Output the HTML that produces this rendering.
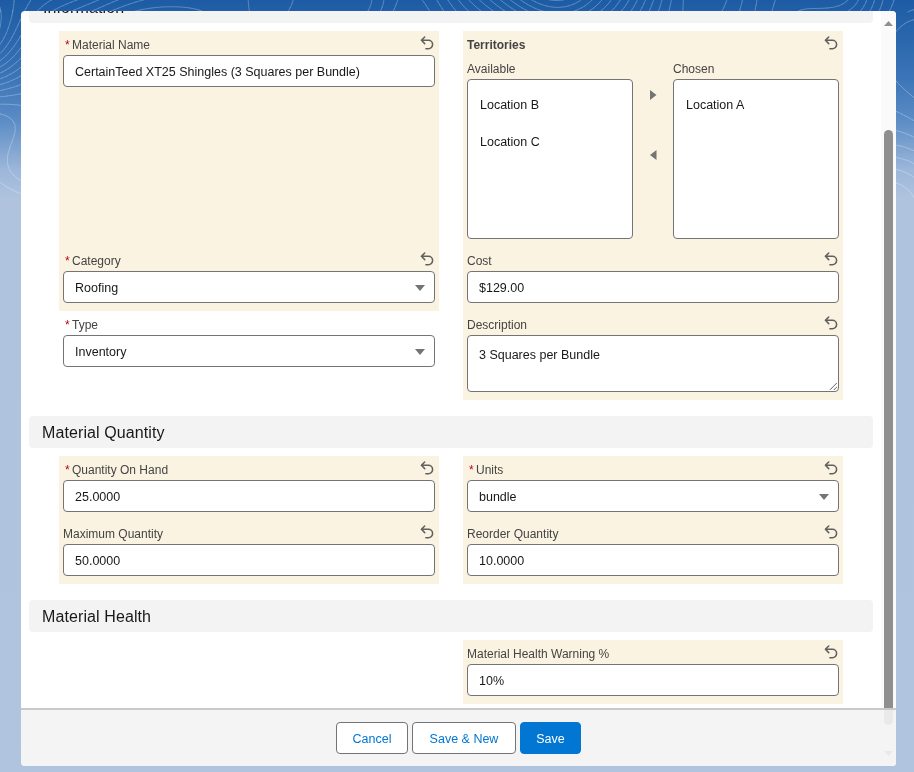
<!DOCTYPE html><html><head><meta charset="utf-8"><style>
html,body{margin:0;padding:0}
body{width:914px;height:772px;overflow:hidden;position:relative;font-family:"Liberation Sans",sans-serif;
background:linear-gradient(to bottom,#1d5ca5 0px,#2a67ad 40px,#3d76b8 80px,#5b8cc5 120px,#9cb7da 170px,#afc3df 198px,#b0c4df 772px);}
.a{position:absolute}
.t12,.t125,.t16,.b12{position:absolute;white-space:nowrap;will-change:transform}
.t12{font-size:12px;line-height:18px}
.t125{font-size:12.5px;line-height:18px}
.t16{font-size:16px;line-height:20px;letter-spacing:0.1px}
.b12{font-size:12px;line-height:18px;font-weight:bold}
#modal{position:absolute;left:21px;top:11px;width:875px;height:755px;background:#fff;border-radius:4px;overflow:hidden}
#inner{position:absolute;left:-21px;top:-11px;width:914px;height:772px}
</style></head><body>

<svg class="a" style="left:0;top:0" width="914" height="198" viewBox="0 0 914 198"><path d="M-1.5 4.0L-2.0 3.0M-1.5 4.0L-0.6 6.0M-0.6 6.0L0.0 7.9M0.0 8.0L0.0 7.9M0.0 8.0L0.5 10.0M0.5 10.0L0.9 12.0M14.1 -2.0L14.1 0.0M14.0 1.7L14.0 2.0M14.1 0.0L14.0 1.7M14.0 2.0L13.8 4.0M13.8 4.0L13.6 6.0M13.6 6.0L13.3 8.0M13.3 8.0L13.0 10.0M13.0 10.0L12.6 12.0M32.0 -1.5L31.0 0.0M32.4 -2.0L32.0 -1.5M683.5 -2.0L683.4 0.0M727.5 -2.0L726.8 0.0M30.0 1.5L29.7 2.0M31.0 0.0L30.0 1.5M683.4 0.0L683.3 2.0M726.8 0.0L726.1 2.0M29.7 2.0L28.4 4.0M683.3 2.0L683.2 4.0M726.0 2.2L725.3 4.0M726.1 2.0L726.0 2.2M28.0 4.7L27.3 6.0M28.4 4.0L28.0 4.7M683.2 4.0L683.1 6.0M725.3 4.0L724.5 6.0M27.3 6.0L26.2 8.0M683.1 6.0L683.0 8.0M724.0 7.1L723.6 8.0M724.5 6.0L724.0 7.1M26.0 8.3L25.1 10.0M26.2 8.0L26.0 8.3M683.0 8.0L682.9 10.0M723.6 8.0L722.6 10.0M25.1 10.0L24.1 12.0M682.9 10.0L682.9 12.0M722.0 11.2L721.6 12.0M722.6 10.0L722.0 11.2M52.0 -0.3L51.5 0.0M54.0 -1.3L52.0 -0.3M55.5 -2.0L54.0 -1.3M398.0 -0.7L397.8 0.0M398.5 -2.0L398.0 -0.7M420.8 -2.0L422.0 -0.5M422.3 0.0L422.0 -0.5M671.7 -2.0L671.3 0.0M742.9 -2.0L742.4 0.0M50.0 0.8L48.1 2.0M51.5 0.0L50.0 0.8M397.8 0.0L397.1 2.0M422.3 0.0L423.7 2.0M671.3 0.0L671.0 2.0M742.0 1.8L742.0 2.0M742.4 0.0L742.0 1.8M46.0 3.4L45.2 4.0M48.0 2.1L46.0 3.4M48.1 2.0L48.0 2.1M397.1 2.0L396.3 4.0M423.7 2.0L424.0 2.4M425.1 4.0L424.0 2.4M671.0 2.0L670.6 4.0M742.0 2.0L741.5 4.0M44.0 4.9L42.7 6.0M45.2 4.0L44.0 4.9M396.0 4.8L395.5 6.0M396.3 4.0L396.0 4.8M425.1 4.0L426.0 5.3M426.4 6.0L426.0 5.3M670.6 4.0L670.1 6.0M741.5 4.0L741.0 6.0M42.0 6.6L40.4 8.0M42.7 6.0L42.0 6.6M395.5 6.0L394.7 8.0M426.4 6.0L427.7 8.0M670.0 6.6L669.7 8.0M670.1 6.0L670.0 6.6M741.0 6.0L740.4 8.0M40.0 8.4L38.4 10.0M40.4 8.0L40.0 8.4M394.0 9.6L393.8 10.0M394.7 8.0L394.0 9.6M427.7 8.0L428.0 8.4M429.0 10.0L428.0 8.4M669.7 8.0L669.2 10.0M740.0 9.6L739.9 10.0M740.4 8.0L740.0 9.6M38.0 10.4L36.6 12.0M38.4 10.0L38.0 10.4M393.8 10.0L392.9 12.0M429.0 10.0L430.0 11.6M430.2 12.0L430.0 11.6M669.2 10.0L668.7 12.0M739.9 10.0L739.3 12.0M78.0 -0.4L76.9 0.0M80.0 -1.2L78.0 -0.4M82.0 -2.0L80.0 -1.2M82.1 -2.0L82.0 -2.0M384.0 -1.1L383.9 0.0M384.1 -2.0L384.0 -1.1M435.6 -2.0L436.0 -1.3M436.8 0.0L436.0 -1.3M662.0 -0.1L662.0 0.0M662.5 -2.0L662.0 -0.1M757.4 -2.0L757.0 0.0M72.0 1.9L71.7 2.0M74.0 1.1L72.0 1.9M76.0 0.3L74.0 1.1M76.9 0.0L76.0 0.3M383.9 0.0L383.5 2.0M436.8 0.0L438.0 2.0M662.0 0.0L661.4 2.0M757.0 0.0L756.6 2.0M68.0 3.5L66.7 4.0M70.0 2.7L68.0 3.5M71.7 2.0L70.0 2.7M383.5 2.0L383.1 4.0M438.0 2.0L438.0 2.0M439.2 4.0L438.0 2.0M661.4 2.0L660.9 4.0M756.6 2.0L756.3 4.0M64.0 5.2L62.2 6.0M66.0 4.3L64.0 5.2M66.7 4.0L66.0 4.3M383.1 4.0L382.5 6.0M439.2 4.0L440.0 5.2M440.5 6.0L440.0 5.2M660.9 4.0L660.3 6.0M756.0 5.4L755.9 6.0M756.3 4.0L756.0 5.4M60.0 7.0L58.1 8.0M62.0 6.1L60.0 7.0M62.2 6.0L62.0 6.1M382.0 7.5L381.8 8.0M382.5 6.0L382.0 7.5M440.5 6.0L441.8 8.0M660.0 6.8L659.6 8.0M660.3 6.0L660.0 6.8M755.9 6.0L755.5 8.0M56.0 9.1L54.5 10.0M58.0 8.1L56.0 9.1M58.1 8.0L58.0 8.1M381.8 8.0L381.0 10.0M441.8 8.0L442.0 8.3M443.1 10.0L442.0 8.3M659.6 8.0L658.9 10.0M755.5 8.0L755.2 10.0M52.0 11.6L51.4 12.0M54.0 10.3L52.0 11.6M54.5 10.0L54.0 10.3M381.0 10.0L380.1 12.0M443.1 10.0L444.0 11.3M444.5 12.0L444.0 11.3M658.9 10.0L658.2 12.0M755.2 10.0L754.8 12.0M100.0 -0.8L98.3 0.0M102.0 -1.6L100.0 -0.8M102.8 -2.0L102.0 -1.6M371.9 -2.0L371.8 0.0M446.5 -2.0L447.9 0.0M654.0 -1.5L653.6 0.0M654.2 -2.0L654.0 -1.5M776.0 -2.0L775.3 0.0M776.0 -2.0L776.0 -2.0M94.0 1.9L93.7 2.0M96.0 1.0L94.0 1.9M98.0 0.1L96.0 1.0M98.3 0.0L98.0 0.1M371.8 0.0L371.5 2.0M447.9 0.0L448.0 0.2M449.2 2.0L448.0 0.2M653.6 0.0L652.9 2.0M775.3 0.0L774.7 2.0M90.0 3.6L89.0 4.0M92.0 2.7L90.0 3.6M93.7 2.0L92.0 2.7M371.5 2.0L371.0 4.0M449.2 2.0L450.0 3.1M450.7 4.0L450.0 3.1M652.9 2.0L652.2 4.0M774.7 2.0L774.0 4.0M86.0 5.2L84.1 6.0M88.0 4.4L86.0 5.2M89.0 4.0L88.0 4.4M371.0 4.0L370.4 6.0M450.7 4.0L452.0 5.8M452.1 6.0L452.0 5.8M652.0 4.5L651.4 6.0M652.2 4.0L652.0 4.5M774.0 4.1L773.5 6.0M774.0 4.0L774.0 4.1M80.0 7.7L79.2 8.0M82.0 6.9L80.0 7.7M84.0 6.0L82.0 6.9M84.1 6.0L84.0 6.0M370.0 6.9L369.5 8.0M370.4 6.0L370.0 6.9M452.1 6.0L453.7 8.0M651.4 6.0L650.6 8.0M773.5 6.0L772.9 8.0M76.0 9.3L74.5 10.0M78.0 8.5L76.0 9.3M79.2 8.0L78.0 8.5M369.5 8.0L368.5 10.0M453.7 8.0L454.0 8.4M455.3 10.0L454.0 8.4M650.0 9.3L649.7 10.0M650.6 8.0L650.0 9.3M772.9 8.0L772.4 10.0M70.0 12.0L69.9 12.0M72.0 11.1L70.0 12.0M74.0 10.2L72.0 11.1M74.5 10.0L74.0 10.2M368.0 10.8L367.2 12.0M368.5 10.0L368.0 10.8M455.3 10.0L456.0 10.8M457.0 12.0L456.0 10.8M649.7 10.0L648.7 12.0M772.0 11.5L771.9 12.0M772.4 10.0L772.0 11.5M118.0 -0.1L117.7 0.0M120.0 -1.0L118.0 -0.1M122.0 -1.8L120.0 -1.0M122.4 -2.0L122.0 -1.8M293.6 -2.0L293.2 0.0M456.8 -2.0L458.0 -0.4M458.3 0.0L458.0 -0.4M646.0 -1.5L645.5 0.0M646.2 -2.0L646.0 -1.5M848.0 -0.0L848.0 0.0M849.7 -2.0L848.0 -0.0M114.0 1.6L113.0 2.0M116.0 0.7L114.0 1.6M117.7 0.0L116.0 0.7M293.2 0.0L292.6 2.0M458.3 0.0L460.0 2.0M645.5 0.0L644.7 2.0M846.0 1.8L845.7 2.0M848.0 0.0L846.0 1.8M110.0 3.3L108.3 4.0M112.0 2.4L110.0 3.3M113.0 2.0L112.0 2.4M292.0 3.7L291.9 4.0M292.6 2.0L292.0 3.7M460.0 2.0L460.0 2.0M461.7 4.0L460.0 2.0M644.0 3.5L643.8 4.0M644.7 2.0L644.0 3.5M844.0 3.2L842.6 4.0M845.7 2.0L844.0 3.2M104.0 5.9L103.7 6.0M106.0 5.0L104.0 5.9M108.0 4.1L106.0 5.0M108.3 4.0L108.0 4.1M291.9 4.0L291.0 6.0M461.7 4.0L462.0 4.4M463.5 6.0L462.0 4.4M643.8 4.0L642.8 6.0M840.0 5.3L838.1 6.0M842.0 4.3L840.0 5.3M842.6 4.0L842.0 4.3M100.0 7.6L99.1 8.0M102.0 6.7L100.0 7.6M103.7 6.0L102.0 6.7M290.0 7.9L289.9 8.0M291.0 6.0L290.0 7.9M463.5 6.0L464.0 6.6M465.4 8.0L464.0 6.6M642.0 7.7L641.8 8.0M642.8 6.0L642.0 7.7M828.0 7.9L827.3 8.0M830.0 7.7L828.0 7.9M832.0 7.4L830.0 7.7M834.0 7.1L832.0 7.4M836.0 6.6L834.0 7.1M838.0 6.0L836.0 6.6M838.1 6.0L838.0 6.0M96.0 9.3L94.4 10.0M98.0 8.5L96.0 9.3M99.1 8.0L98.0 8.5M289.9 8.0L288.9 10.0M465.4 8.0L466.0 8.6M467.4 10.0L466.0 8.6M641.8 8.0L640.7 10.0M802.0 9.8L801.3 10.0M804.0 9.4L802.0 9.8M806.0 9.0L804.0 9.4M808.0 8.8L806.0 9.0M810.0 8.6L808.0 8.8M812.0 8.5L810.0 8.6M814.0 8.5L812.0 8.5M816.0 8.4L814.0 8.5M818.0 8.4L816.0 8.4M820.0 8.3L818.0 8.4M822.0 8.3L820.0 8.3M824.0 8.2L822.0 8.3M826.0 8.1L824.0 8.2M827.3 8.0L826.0 8.1M90.0 11.9L89.8 12.0M92.0 11.1L90.0 11.9M94.0 10.2L92.0 11.1M94.4 10.0L94.0 10.2M288.0 11.6L287.8 12.0M288.9 10.0L288.0 11.6M467.4 10.0L468.0 10.6M469.5 12.0L468.0 10.6M640.0 11.2L639.5 12.0M640.7 10.0L640.0 11.2M798.0 11.2L796.4 12.0M800.0 10.4L798.0 11.2M801.3 10.0L800.0 10.4M144.0 -0.3L143.0 0.0M146.0 -0.8L144.0 -0.3M148.0 -1.3L146.0 -0.8M150.0 -1.8L148.0 -1.3M150.7 -2.0L150.0 -1.8M248.0 -2.0L248.0 -1.8M248.2 0.0L248.0 -1.8M467.0 -2.0L468.0 -0.9M468.9 0.0L468.0 -0.9M638.0 -1.5L637.3 0.0M638.2 -2.0L638.0 -1.5M859.5 -2.0L858.5 0.0M138.0 1.4L136.1 2.0M140.0 0.8L138.0 1.4M142.0 0.3L140.0 0.8M143.0 0.0L142.0 0.3M248.2 0.0L248.3 2.0M468.9 0.0L470.0 1.2M470.8 2.0L470.0 1.2M637.3 0.0L636.4 2.0M858.0 0.9L857.3 2.0M858.5 0.0L858.0 0.9M130.0 3.9L129.8 4.0M132.0 3.3L130.0 3.9M134.0 2.6L132.0 3.3M136.0 2.0L134.0 2.6M136.1 2.0L136.0 2.0M248.3 2.0L248.5 4.0M470.8 2.0L472.0 3.2M472.8 4.0L472.0 3.2M636.0 2.7L635.3 4.0M636.4 2.0L636.0 2.7M856.0 3.9L856.0 4.0M857.3 2.0L856.0 3.9M126.0 5.3L124.1 6.0M128.0 4.6L126.0 5.3M129.8 4.0L128.0 4.6M248.5 4.0L248.7 6.0M472.8 4.0L474.0 5.1M475.0 6.0L474.0 5.1M635.3 4.0L634.2 6.0M856.0 4.0L854.3 6.0M120.0 7.5L118.7 8.0M122.0 6.8L120.0 7.5M124.0 6.0L122.0 6.8M124.1 6.0L124.0 6.0M248.7 6.0L248.9 8.0M475.0 6.0L476.0 6.9M477.3 8.0L476.0 6.9M634.0 6.4L633.0 8.0M634.2 6.0L634.0 6.4M854.0 6.3L852.3 8.0M854.3 6.0L854.0 6.3M114.0 9.8L113.6 10.0M116.0 9.1L114.0 9.8M118.0 8.3L116.0 9.1M118.7 8.0L118.0 8.3M248.9 8.0L249.2 10.0M477.3 8.0L478.0 8.6M479.7 10.0L478.0 8.6M632.0 9.5L631.6 10.0M633.0 8.0L632.0 9.5M850.0 9.8L849.7 10.0M852.0 8.2L850.0 9.8M852.3 8.0L852.0 8.2M110.0 11.5L108.8 12.0M112.0 10.7L110.0 11.5M113.6 10.0L112.0 10.7M249.2 10.0L249.6 12.0M479.7 10.0L480.0 10.2M482.0 11.8L480.0 10.2M482.3 12.0L482.0 11.8M631.6 10.0L630.2 12.0M848.0 11.1L846.4 12.0M849.7 10.0L848.0 11.1M477.5 -2.0L478.0 -1.5M479.6 0.0L478.0 -1.5M630.0 -2.0L629.0 0.0M630.0 -2.0L630.0 -2.0M867.6 -2.0L866.8 0.0M479.6 0.0L480.0 0.4M481.8 2.0L480.0 0.4M628.0 1.8L627.9 2.0M629.0 0.0L628.0 1.8M866.8 0.0L866.0 2.0M481.8 2.0L482.0 2.2M484.0 3.9L482.0 2.2M484.1 4.0L484.0 3.9M627.9 2.0L626.6 4.0M866.0 2.0L865.1 4.0M866.0 2.0L866.0 2.0M484.1 4.0L486.0 5.6M486.5 6.0L486.0 5.6M626.0 4.9L625.3 6.0M626.6 4.0L626.0 4.9M865.1 4.0L864.0 6.0M152.0 8.0L151.9 8.0M154.0 7.7L152.0 8.0M156.0 7.5L154.0 7.7M158.0 7.3L156.0 7.5M160.0 7.2L158.0 7.3M162.0 7.0L160.0 7.2M164.0 6.9L162.0 7.0M166.0 6.8L164.0 6.9M168.0 6.8L166.0 6.8M170.0 6.8L168.0 6.8M172.0 6.7L170.0 6.8M174.0 6.8L172.0 6.7M176.0 6.8L174.0 6.8M178.0 6.9L176.0 6.8M180.0 7.0L178.0 6.9M182.0 7.1L180.0 7.0M184.0 7.3L182.0 7.1M186.0 7.5L184.0 7.3M188.0 7.7L186.0 7.5M189.9 8.0L188.0 7.7M486.5 6.0L488.0 7.1M489.1 8.0L488.0 7.1M624.0 7.8L623.8 8.0M625.3 6.0L624.0 7.8M864.0 6.0L862.8 8.0M864.0 6.0L864.0 6.0M142.0 9.6L140.1 10.0M144.0 9.2L142.0 9.6M146.0 8.9L144.0 9.2M148.0 8.5L146.0 8.9M150.0 8.3L148.0 8.5M151.9 8.0L150.0 8.3M189.9 8.0L190.0 8.0M192.0 8.4L190.0 8.0M194.0 8.8L192.0 8.4M196.0 9.2L194.0 8.8M198.0 9.8L196.0 9.2M198.7 10.0L198.0 9.8M489.1 8.0L490.0 8.7M491.8 10.0L490.0 8.7M623.8 8.0L622.2 10.0M862.0 9.1L861.3 10.0M862.8 8.0L862.0 9.1M132.0 12.0L131.8 12.0M134.0 11.4L132.0 12.0M136.0 10.9L134.0 11.4M138.0 10.5L136.0 10.9M140.0 10.0L138.0 10.5M140.1 10.0L140.0 10.0M198.7 10.0L200.0 10.4M202.0 11.1L200.0 10.4M204.0 11.9L202.0 11.1M204.3 12.0L204.0 11.9M491.8 10.0L492.0 10.1M494.0 11.6L492.0 10.1M494.6 12.0L494.0 11.6M622.0 10.3L620.5 12.0M622.2 10.0L622.0 10.3M860.0 11.6L859.7 12.0M861.3 10.0L860.0 11.6M488.0 -2.0L488.0 -2.0M490.0 -0.2L488.0 -2.0M490.2 0.0L490.0 -0.2M621.5 -2.0L620.3 0.0M875.2 -2.0L874.7 0.0M490.2 0.0L492.0 1.5M492.6 2.0L492.0 1.5M620.0 0.4L619.0 2.0M620.3 0.0L620.0 0.4M874.7 0.0L874.0 2.0M492.6 2.0L494.0 3.1M495.1 4.0L494.0 3.1M618.0 3.4L617.5 4.0M619.0 2.0L618.0 3.4M874.0 2.1L873.3 4.0M874.0 2.0L874.0 2.1M495.1 4.0L496.0 4.7M497.7 6.0L496.0 4.7M616.0 6.0L616.0 6.0M617.5 4.0L616.0 6.0M873.3 4.0L872.5 6.0M497.7 6.0L498.0 6.2M500.0 7.7L498.0 6.2M500.5 8.0L500.0 7.7M616.0 6.0L614.3 8.0M872.0 7.1L871.6 8.0M872.5 6.0L872.0 7.1M500.5 8.0L502.0 9.1M503.3 10.0L502.0 9.1M614.0 8.3L612.4 10.0M614.3 8.0L614.0 8.3M871.6 8.0L870.5 10.0M503.3 10.0L504.0 10.4M506.0 11.8L504.0 10.4M506.4 12.0L506.0 11.8M612.0 10.4L610.3 12.0M612.4 10.0L612.0 10.4M870.0 10.9L869.4 12.0M870.5 10.0L870.0 10.9M498.2 -2.0L500.0 -0.5M500.6 0.0L500.0 -0.5M612.0 -1.1L611.2 0.0M612.6 -2.0L612.0 -1.1M883.6 -2.0L883.1 0.0M500.6 0.0L502.0 1.1M503.1 2.0L502.0 1.1M610.0 1.6L609.7 2.0M611.2 0.0L610.0 1.6M883.1 0.0L882.5 2.0M503.1 2.0L504.0 2.7M505.7 4.0L504.0 2.7M609.7 2.0L608.1 4.0M882.0 3.7L881.9 4.0M882.5 2.0L882.0 3.7M505.7 4.0L506.0 4.2M508.0 5.7L506.0 4.2M508.4 6.0L508.0 5.7M608.0 4.1L606.2 6.0M608.1 4.0L608.0 4.1M881.9 4.0L881.2 6.0M508.4 6.0L510.0 7.1M511.3 8.0L510.0 7.1M606.0 6.3L604.2 8.0M606.2 6.0L606.0 6.3M881.2 6.0L880.4 8.0M511.3 8.0L512.0 8.4M514.0 9.7L512.0 8.4M514.4 10.0L514.0 9.7M602.0 10.0L602.0 10.0M604.0 8.2L602.0 10.0M604.2 8.0L604.0 8.2M880.0 8.9L879.5 10.0M880.4 8.0L880.0 8.9M514.4 10.0L516.0 11.0M517.7 12.0L516.0 11.0M600.0 11.6L599.5 12.0M602.0 10.0L600.0 11.6M879.5 10.0L878.6 12.0M508.2 -2.0L510.0 -0.5M510.6 0.0L510.0 -0.5M602.0 -0.1L601.9 0.0M603.5 -2.0L602.0 -0.1M894.8 -2.0L894.1 0.0M510.6 0.0L512.0 1.1M513.2 2.0L512.0 1.1M601.9 0.0L600.1 2.0M894.0 0.2L893.4 2.0M894.1 0.0L894.0 0.2M513.2 2.0L514.0 2.6M516.0 4.0L514.0 2.6M516.0 4.0L516.0 4.0M600.0 2.1L598.2 4.0M600.1 2.0L600.0 2.1M893.4 2.0L892.7 4.0M516.0 4.0L518.0 5.3M519.0 6.0L518.0 5.3M598.0 4.2L596.0 6.0M598.2 4.0L598.0 4.2M892.0 5.6L891.8 6.0M892.7 4.0L892.0 5.6M519.0 6.0L520.0 6.6M522.0 7.9L520.0 6.6M522.2 8.0L522.0 7.9M594.0 7.7L593.6 8.0M596.0 6.0L594.0 7.7M596.0 6.0L596.0 6.0M891.8 6.0L891.0 8.0M522.2 8.0L524.0 9.0M525.8 10.0L524.0 9.0M592.0 9.1L590.8 10.0M593.6 8.0L592.0 9.1M891.0 8.0L890.0 10.0M525.8 10.0L526.0 10.1M528.0 11.2L526.0 10.1M529.7 12.0L528.0 11.2M588.0 11.7L587.5 12.0M590.0 10.5L588.0 11.7M590.8 10.0L590.0 10.5M890.0 10.0L889.0 12.0M890.0 10.0L890.0 10.0M518.1 -2.0L520.0 -0.5M520.7 0.0L520.0 -0.5M593.9 -2.0L592.0 0.0M520.7 0.0L522.0 0.9M523.6 2.0L522.0 0.9M590.0 1.9L589.9 2.0M592.0 0.0L590.0 1.9M592.0 0.0L592.0 0.0M523.6 2.0L524.0 2.2M526.0 3.5L524.0 2.2M526.8 4.0L526.0 3.5M588.0 3.6L587.5 4.0M589.9 2.0L588.0 3.6M526.8 4.0L528.0 4.7M530.0 5.8L528.0 4.7M530.4 6.0L530.0 5.8M586.0 5.1L584.6 6.0M587.5 4.0L586.0 5.1M530.4 6.0L532.0 6.8M534.0 7.8L532.0 6.8M534.5 8.0L534.0 7.8M582.0 7.6L581.2 8.0M584.0 6.4L582.0 7.6M584.6 6.0L584.0 6.4M534.5 8.0L536.0 8.7M538.0 9.5L536.0 8.7M539.5 10.0L538.0 9.5M578.0 9.5L576.9 10.0M580.0 8.6L578.0 9.5M581.2 8.0L580.0 8.6M914.0 9.8L913.0 10.0M916.0 9.6L914.0 9.8M539.5 10.0L540.0 10.2M542.0 10.8L540.0 10.2M544.0 11.4L542.0 10.8M546.0 11.9L544.0 11.4M546.3 12.0L546.0 11.9M572.0 11.7L570.7 12.0M574.0 11.1L572.0 11.7M576.0 10.4L574.0 11.1M576.9 10.0L576.0 10.4M908.0 11.9L907.8 12.0M910.0 10.9L908.0 11.9M912.0 10.2L910.0 10.9M913.0 10.0L912.0 10.2M528.7 -2.0L530.0 -1.2M532.0 0.0L530.0 -1.2M582.0 -0.8L580.9 0.0M583.4 -2.0L582.0 -0.8M532.0 0.0L532.0 0.0M534.0 1.1L532.0 0.0M535.7 2.0L534.0 1.1M578.0 1.9L577.9 2.0M580.0 0.6L578.0 1.9M580.9 0.0L580.0 0.6M535.7 2.0L536.0 2.1M538.0 3.1L536.0 2.1M540.0 3.9L538.0 3.1M540.3 4.0L540.0 3.9M574.0 4.0L574.0 4.0M576.0 3.0L574.0 4.0M577.9 2.0L576.0 3.0M540.3 4.0L542.0 4.6M544.0 5.3L542.0 4.6M546.0 5.8L544.0 5.3M546.7 6.0L546.0 5.8M570.0 5.5L568.2 6.0M572.0 4.8L570.0 5.5M574.0 4.0L572.0 4.8M546.7 6.0L548.0 6.3M550.0 6.7L548.0 6.3M552.0 7.0L550.0 6.7M554.0 7.2L552.0 7.0M556.0 7.3L554.0 7.2M558.0 7.4L556.0 7.3M560.0 7.3L558.0 7.4M562.0 7.1L560.0 7.3M564.0 6.9L562.0 7.1M566.0 6.5L564.0 6.9M568.0 6.1L566.0 6.5M568.2 6.0L568.0 6.1M543.1 -2.0L544.0 -1.7M546.0 -1.0L544.0 -1.7M548.0 -0.5L546.0 -1.0M550.0 -0.1L548.0 -0.5M550.5 0.0L550.0 -0.1M564.0 -0.3L562.4 0.0M566.0 -0.9L564.0 -0.3M568.0 -1.6L566.0 -0.9M569.1 -2.0L568.0 -1.6M550.5 0.0L552.0 0.2M554.0 0.4L552.0 0.2M556.0 0.5L554.0 0.4M558.0 0.5L556.0 0.5M560.0 0.3L558.0 0.5M562.0 0.1L560.0 0.3M562.4 0.0L562.0 0.1M0.5 10.0L0.9 12.0M0.9 12.0L1.1 14.0M1.1 14.0L1.2 16.0M1.2 16.0L1.2 18.0M1.2 18.0L1.1 20.0M1.1 20.0L0.9 22.0M0.9 22.0L0.6 24.0M0.6 24.0L0.3 26.0M0.0 27.2L-0.2 28.0M0.3 26.0L0.0 27.2M-0.2 28.0L-0.7 30.0M-0.7 30.0L-1.4 32.0M-1.4 32.0L-2.0 33.6M13.0 10.0L12.6 12.0M12.6 12.0L12.2 14.0M12.0 14.9L11.8 16.0M12.2 14.0L12.0 14.9M11.8 16.0L11.3 18.0M11.3 18.0L10.8 20.0M10.8 20.0L10.2 22.0M10.0 22.7L9.6 24.0M10.2 22.0L10.0 22.7M9.6 24.0L9.0 26.0M9.0 26.0L8.3 28.0M8.0 28.8L7.6 30.0M8.3 28.0L8.0 28.8M7.6 30.0L6.8 32.0M6.0 33.8L5.9 34.0M6.8 32.0L6.0 33.8M5.9 34.0L5.0 36.0M4.0 37.9L4.0 38.0M5.0 36.0L4.0 37.9M4.0 38.0L2.8 40.0M2.0 41.4L1.6 42.0M2.8 40.0L2.0 41.4M1.6 42.0L0.3 44.0M0.0 44.4L-1.3 46.0M0.3 44.0L0.0 44.4M-1.3 46.0L-2.0 46.9M22.0 16.3L21.2 18.0M21.2 18.0L20.3 20.0M20.0 20.6L19.4 22.0M20.3 20.0L20.0 20.6M19.4 22.0L18.5 24.0M18.0 25.0L17.6 26.0M18.5 24.0L18.0 25.0M17.6 26.0L16.6 28.0M16.0 29.3L15.7 30.0M16.6 28.0L16.0 29.3M15.7 30.0L14.7 32.0M14.0 33.5L13.7 34.0M14.7 32.0L14.0 33.5M13.7 34.0L12.7 36.0M12.0 37.3L11.6 38.0M12.7 36.0L12.0 37.3M11.6 38.0L10.5 40.0M10.0 40.8L9.2 42.0M10.5 40.0L10.0 40.8M8.0 43.9L7.9 44.0M9.2 42.0L8.0 43.9M7.9 44.0L6.5 46.0M6.0 46.7L5.0 48.0M6.5 46.0L6.0 46.7M4.0 49.2L3.3 50.0M5.0 48.0L4.0 49.2M2.0 51.5L1.5 52.0M3.3 50.0L2.0 51.5M0.0 53.5L-0.6 54.0M1.5 52.0L0.0 53.5M-0.6 54.0L-2.0 55.2M22.0 33.6L21.8 34.0M21.8 34.0L20.6 36.0M20.0 37.0L19.4 38.0M20.6 36.0L20.0 37.0M19.4 38.0L18.2 40.0M18.0 40.3L16.9 42.0M18.2 40.0L18.0 40.3M16.0 43.4L15.6 44.0M16.9 42.0L16.0 43.4M15.6 44.0L14.2 46.0M14.0 46.3L12.7 48.0M14.2 46.0L14.0 46.3M12.0 48.9L11.2 50.0M12.7 48.0L12.0 48.9M10.0 51.4L9.5 52.0M11.2 50.0L10.0 51.4M8.0 53.6L7.7 54.0M9.5 52.0L8.0 53.6M6.0 55.7L5.7 56.0M7.7 54.0L6.0 55.7M4.0 57.5L3.5 58.0M5.7 56.0L4.0 57.5M2.0 59.2L1.0 60.0M3.5 58.0L2.0 59.2M0.0 60.7L-1.9 62.0M1.0 60.0L0.0 60.7M-1.9 62.0L-2.0 62.1M22.0 46.2L20.7 48.0M20.0 48.9L19.1 50.0M20.7 48.0L20.0 48.9M18.0 51.4L17.5 52.0M19.1 50.0L18.0 51.4M16.0 53.8L15.8 54.0M17.5 52.0L16.0 53.8M15.8 54.0L14.0 56.0M14.0 56.0L12.0 58.0M14.0 56.0L14.0 56.0M10.0 59.9L9.9 60.0M12.0 58.0L10.0 59.9M12.0 58.0L12.0 58.0M8.0 61.6L7.5 62.0M9.9 60.0L8.0 61.6M6.0 63.2L4.9 64.0M7.5 62.0L6.0 63.2M2.0 65.9L1.9 66.0M4.0 64.6L2.0 65.9M4.9 64.0L4.0 64.6M0.0 67.1L-1.6 68.0M1.9 66.0L0.0 67.1M-1.6 68.0L-2.0 68.2M22.0 56.8L20.9 58.0M20.0 58.9L18.9 60.0M20.9 58.0L20.0 58.9M18.0 60.9L16.8 62.0M18.9 60.0L18.0 60.9M16.0 62.7L14.5 64.0M16.8 62.0L16.0 62.7M12.0 66.0L12.0 66.0M14.0 64.4L12.0 66.0M14.5 64.0L14.0 64.4M10.0 67.4L9.1 68.0M12.0 66.0L10.0 67.4M6.0 70.0L6.0 70.0M8.0 68.7L6.0 70.0M9.1 68.0L8.0 68.7M4.0 71.1L2.3 72.0M6.0 70.0L4.0 71.1M0.0 73.1L-2.0 74.0M2.0 72.2L0.0 73.1M2.3 72.0L2.0 72.2M20.0 67.9L19.9 68.0M22.0 66.3L20.0 67.9M18.0 69.4L17.2 70.0M19.9 68.0L18.0 69.4M16.0 70.8L14.2 72.0M17.2 70.0L16.0 70.8M12.0 73.3L10.8 74.0M14.0 72.1L12.0 73.3M14.2 72.0L14.0 72.1M8.0 75.5L6.9 76.0M10.0 74.4L8.0 75.5M10.8 74.0L10.0 74.4M4.0 77.3L2.3 78.0M6.0 76.4L4.0 77.3M6.9 76.0L6.0 76.4M0.0 78.9L-2.0 79.6M2.0 78.1L0.0 78.9M2.3 78.0L2.0 78.1M22.0 75.2L20.7 76.0M18.0 77.5L17.1 78.0M20.0 76.4L18.0 77.5M20.7 76.0L20.0 76.4M14.0 79.5L12.9 80.0M16.0 78.6L14.0 79.5M17.1 78.0L16.0 78.6M10.0 81.2L8.1 82.0M12.0 80.4L10.0 81.2M12.9 80.0L12.0 80.4M4.0 83.4L2.2 84.0M6.0 82.8L4.0 83.4M8.0 82.0L6.0 82.8M8.1 82.0L8.0 82.0M0.0 84.6L-2.0 85.2M2.0 84.1L0.0 84.6M2.2 84.0L2.0 84.1M18.0 85.7L17.0 86.0M20.0 84.9L18.0 85.7M22.0 84.1L20.0 84.9M12.0 87.6L10.7 88.0M14.0 87.0L12.0 87.6M16.0 86.4L14.0 87.0M17.0 86.0L16.0 86.4M4.0 89.7L2.7 90.0M6.0 89.2L4.0 89.7M8.0 88.7L6.0 89.2M10.0 88.2L8.0 88.7M10.7 88.0L10.0 88.2M0.0 90.6L-2.0 91.0M2.0 90.2L0.0 90.6M2.7 90.0L2.0 90.2M22.0 93.6L20.1 94.0M8.0 95.9L7.4 96.0M10.0 95.6L8.0 95.9M12.0 95.4L10.0 95.6M14.0 95.0L12.0 95.4M16.0 94.7L14.0 95.0M18.0 94.4L16.0 94.7M20.0 94.0L18.0 94.4M20.1 94.0L20.0 94.0M0.0 96.9L-2.0 97.2M2.0 96.7L0.0 96.9M4.0 96.5L2.0 96.7M6.0 96.2L4.0 96.5M7.4 96.0L6.0 96.2M0.0 104.2L-2.0 104.3M2.0 104.2L0.0 104.2M4.0 104.2L2.0 104.2M6.0 104.3L4.0 104.2M8.0 104.3L6.0 104.3M10.0 104.4L8.0 104.3M12.0 104.5L10.0 104.4M14.0 104.7L12.0 104.5M16.0 104.8L14.0 104.7M18.0 105.0L16.0 104.8M20.0 105.3L18.0 105.0M22.0 105.5L20.0 105.3M0.0 113.9L-2.0 113.5M0.5 114.0L0.0 113.9M0.5 114.0L2.0 114.4M4.0 115.1L2.0 114.4M6.0 115.8L4.0 115.1M6.4 116.0L6.0 115.8M6.4 116.0L8.0 116.9M9.8 118.0L8.0 116.9M9.8 118.0L10.0 118.1M12.0 119.9L10.0 118.1M12.1 120.0L12.0 119.9M12.1 120.0L13.5 122.0M13.5 122.0L14.0 123.0M14.5 124.0L14.0 123.0M14.5 124.0L15.0 126.0M15.0 126.0L15.2 128.0M15.2 128.0L15.1 130.0M15.1 130.0L14.9 132.0M14.9 132.0L14.5 134.0M14.0 135.6L13.9 136.0M14.5 134.0L14.0 135.6M13.9 136.0L13.3 138.0M13.3 138.0L12.6 140.0M12.0 141.6L11.9 142.0M12.6 140.0L12.0 141.6M11.9 142.0L11.1 144.0M11.1 144.0L10.4 146.0M10.0 147.1L9.7 148.0M10.4 146.0L10.0 147.1M9.7 148.0L9.1 150.0M9.1 150.0L8.5 152.0M8.5 152.0L8.0 154.0M8.0 154.3L7.7 156.0M8.0 154.0L8.0 154.3M7.7 156.0L7.5 158.0M7.5 158.0L7.4 160.0M7.4 160.0L7.4 162.0M7.4 162.0L7.7 164.0M7.7 164.0L8.0 165.4M8.1 166.0L8.0 165.4M8.1 166.0L8.8 168.0M8.8 168.0L9.7 170.0M9.7 170.0L10.0 170.4M11.0 172.0L10.0 170.4M11.0 172.0L12.0 173.4M12.5 174.0L12.0 173.4M12.5 174.0L14.0 175.5M14.5 176.0L14.0 175.5M14.5 176.0L16.0 177.3M16.9 178.0L16.0 177.3M16.9 178.0L18.0 178.8M19.9 180.0L18.0 178.8M19.9 180.0L20.0 180.1M22.0 181.2L20.0 180.1M-0.1 182.0L-2.0 180.1M-0.1 182.0L0.0 182.1M2.0 183.7L0.0 182.1M2.4 184.0L2.0 183.7M2.4 184.0L4.0 185.2M5.2 186.0L4.0 185.2M5.2 186.0L6.0 186.5M8.0 187.7L6.0 186.5M8.5 188.0L8.0 187.7M8.5 188.0L10.0 188.8M12.0 189.8L10.0 188.8M12.4 190.0L12.0 189.8M12.4 190.0L14.0 190.8M16.0 191.7L14.0 190.8M16.8 192.0L16.0 191.7M16.8 192.0L18.0 192.5M20.0 193.3L18.0 192.5M21.7 194.0L20.0 193.3M21.7 194.0L22.0 194.1M-1.9 198.0L-2.0 198.0M-1.9 198.0L0.0 198.7M2.0 199.4L0.0 198.7M3.8 200.0L2.0 199.4M3.8 200.0L4.0 200.1M6.0 200.8L4.0 200.1M8.0 201.5L6.0 200.8M9.5 202.0L8.0 201.5M9.5 202.0L10.0 202.2M12.0 202.9L10.0 202.2M14.0 203.6L12.0 202.9M15.1 204.0L14.0 203.6M15.1 204.0L16.0 204.3M18.0 205.1L16.0 204.3M20.0 205.8L18.0 205.1M20.5 206.0L20.0 205.8M897.0 183.4L895.0 182.7M898.7 184.0L897.0 183.4M898.7 184.0L899.0 184.1M901.0 185.0L899.0 184.1M902.8 186.0L901.0 185.0M902.8 186.0L903.0 186.1M905.0 187.4L903.0 186.1M905.8 188.0L905.0 187.4M905.8 188.0L907.0 189.0M908.2 190.0L907.0 189.0M908.2 190.0L909.0 190.8M910.1 192.0L909.0 190.8M910.1 192.0L911.0 193.0M911.7 194.0L911.0 193.0M911.7 194.0L913.0 195.9M913.1 196.0L913.0 195.9M913.1 196.0L914.1 198.0M914.1 198.0L915.0 199.9M915.0 200.0L915.0 199.9M915.0 200.0L915.7 202.0M915.7 202.0L916.3 204.0M916.3 204.0L916.7 206.0M897.0 169.8L895.0 169.4M897.9 170.0L897.0 169.8M897.9 170.0L899.0 170.3M901.0 170.8L899.0 170.3M903.0 171.5L901.0 170.8M904.3 172.0L903.0 171.5M904.3 172.0L905.0 172.3M907.0 173.2L905.0 172.3M908.6 174.0L907.0 173.2M908.6 174.0L909.0 174.2M911.0 175.3L909.0 174.2M912.0 176.0L911.0 175.3M912.0 176.0L913.0 176.6M914.9 178.0L913.0 176.6M914.9 178.0L915.0 178.1M917.0 179.8L915.0 178.1M897.0 157.7L895.0 157.4M898.6 158.0L897.0 157.7M898.6 158.0L899.0 158.1M901.0 158.6L899.0 158.1M903.0 159.1L901.0 158.6M905.0 159.7L903.0 159.1M905.8 160.0L905.0 159.7M905.8 160.0L907.0 160.4M909.0 161.2L907.0 160.4M910.8 162.0L909.0 161.2M910.8 162.0L911.0 162.1M913.0 163.1L911.0 162.1M914.7 164.0L913.0 163.1M914.7 164.0L915.0 164.2M917.0 165.3L915.0 164.2M897.0 145.3L895.0 145.0M899.0 145.7L897.0 145.3M900.5 146.0L899.0 145.7M900.5 146.0L901.0 146.1M903.0 146.6L901.0 146.1M905.0 147.2L903.0 146.6M907.0 147.9L905.0 147.2M907.2 148.0L907.0 147.9M907.2 148.0L909.0 148.6M911.0 149.5L909.0 148.6M912.3 150.0L911.0 149.5M912.3 150.0L913.0 150.3M915.0 151.3L913.0 150.3M916.5 152.0L915.0 151.3M916.5 152.0L917.0 152.3M897.0 130.9L895.0 130.5M899.0 131.4L897.0 130.9M901.0 132.0L899.0 131.4M901.0 132.0L901.0 132.0M903.0 132.6L901.0 132.0M905.0 133.3L903.0 132.6M906.7 134.0L905.0 133.3M906.7 134.0L907.0 134.1M909.0 134.9L907.0 134.1M911.0 135.8L909.0 134.9M911.5 136.0L911.0 135.8M911.5 136.0L913.0 136.7M915.0 137.6L913.0 136.7M915.8 138.0L915.0 137.6M915.8 138.0L917.0 138.6M897.0 111.7L895.0 110.7M897.6 112.0L897.0 111.7M897.6 112.0L899.0 112.7M901.0 113.7L899.0 112.7M901.6 114.0L901.0 113.7M901.6 114.0L903.0 114.7M905.0 115.8L903.0 114.7M905.4 116.0L905.0 115.8M905.4 116.0L907.0 116.8M909.0 117.9L907.0 116.8M909.1 118.0L909.0 117.9M909.1 118.0L911.0 119.0M912.7 120.0L911.0 119.0M912.7 120.0L913.0 120.2M915.0 121.3L913.0 120.2M916.2 122.0L915.0 121.3M916.2 122.0L917.0 122.5M915.0 19.6L913.1 20.0M917.0 19.4L915.0 19.6M909.0 21.3L907.7 22.0M911.0 20.6L909.0 21.3M913.0 20.0L911.0 20.6M913.1 20.0L913.0 20.0M905.0 23.5L904.3 24.0M907.0 22.3L905.0 23.5M907.7 22.0L907.0 22.3M903.0 24.9L901.7 26.0M904.3 24.0L903.0 24.9M901.0 26.5L899.4 28.0M901.7 26.0L901.0 26.5M899.0 28.4L897.4 30.0M899.4 28.0L899.0 28.4M897.0 30.4L895.6 32.0M897.4 30.0L897.0 30.4M895.6 32.0L895.0 32.7M895.2 80.0L895.0 79.7M895.2 80.0L897.0 82.0M897.0 82.0L897.0 82.1M898.8 84.0L897.0 82.1M898.8 84.0L899.0 84.2M900.8 86.0L899.0 84.2M900.8 86.0L901.0 86.2M902.8 88.0L901.0 86.2M902.8 88.0L903.0 88.2M905.0 90.0L903.0 88.2M905.0 90.0L905.0 90.0M907.0 91.8L905.0 90.0M907.2 92.0L907.0 91.8M907.2 92.0L909.0 93.5M909.5 94.0L909.0 93.5M909.5 94.0L911.0 95.2M911.9 96.0L911.0 95.2M911.9 96.0L913.0 96.9M914.4 98.0L913.0 96.9M914.4 98.0L915.0 98.5M916.9 100.0L915.0 98.5M916.9 100.0L917.0 100.1" fill="none" stroke="rgba(255,255,255,0.2)" stroke-width="1" stroke-linecap="round"/></svg>
<div id="modal"><div id="inner">
<div class="a" style="left:29px;top:-9px;width:844px;height:32px;background:#f3f3f3;border-radius:4px"></div>
<div class="t16" style="left:42.7px;top:-2px;color:#181818">Information</div>
<div class="a" style="left:59px;top:31px;width:380px;height:280px;background:#faf3e1"></div>
<div class="a" style="left:463px;top:31px;width:380px;height:369px;background:#faf3e1"></div>
<div class="t12" style="left:65px;top:36px;color:#ba0517">*</div>
<div class="t12" style="left:72.2px;top:36px;color:#444444">Material Name</div>
<svg class="a" style="left:418px;top:34px" width="18" height="18" viewBox="0 0 18 18"><path d="M6.7 3 L3.4 6.3 L6.7 9.6 M3.6 6.3 H10.4 A4.2 4.2 0 0 1 10.4 14.7 H7.9" fill="none" stroke="#606060" stroke-width="1.55" stroke-linecap="round" stroke-linejoin="round"/></svg>
<div class="a" style="left:63px;top:55px;width:372px;height:32px;background:#fff;border:1px solid #747474;border-radius:4px;box-sizing:border-box"></div>
<div class="t125" style="left:75.4px;top:63px;color:#181818">CertainTeed XT25 Shingles (3 Squares per Bundle)</div>
<div class="t12" style="left:65px;top:252px;color:#ba0517">*</div>
<div class="t12" style="left:72.2px;top:252px;color:#444444">Category</div>
<svg class="a" style="left:418px;top:250px" width="18" height="18" viewBox="0 0 18 18"><path d="M6.7 3 L3.4 6.3 L6.7 9.6 M3.6 6.3 H10.4 A4.2 4.2 0 0 1 10.4 14.7 H7.9" fill="none" stroke="#606060" stroke-width="1.55" stroke-linecap="round" stroke-linejoin="round"/></svg>
<div class="a" style="left:63px;top:271px;width:372px;height:32px;background:#fff;border:1px solid #747474;border-radius:4px;box-sizing:border-box"></div>
<div class="t125" style="left:75.4px;top:279px;color:#181818">Roofing</div>
<svg class="a" style="left:415px;top:285px" width="10" height="6" viewBox="0 0 10 6"><path d="M0 0 H10 L5 6 Z" fill="#747474"/></svg>
<div class="t12" style="left:65px;top:316px;color:#ba0517">*</div>
<div class="t12" style="left:72.2px;top:316px;color:#444444">Type</div>
<div class="a" style="left:63px;top:335px;width:372px;height:32px;background:#fff;border:1px solid #747474;border-radius:4px;box-sizing:border-box"></div>
<div class="t125" style="left:75.4px;top:343px;color:#181818">Inventory</div>
<svg class="a" style="left:415px;top:349px" width="10" height="6" viewBox="0 0 10 6"><path d="M0 0 H10 L5 6 Z" fill="#747474"/></svg>
<div class="b12" style="left:467px;top:36px;color:#444444">Territories</div>
<svg class="a" style="left:822px;top:34px" width="18" height="18" viewBox="0 0 18 18"><path d="M6.7 3 L3.4 6.3 L6.7 9.6 M3.6 6.3 H10.4 A4.2 4.2 0 0 1 10.4 14.7 H7.9" fill="none" stroke="#606060" stroke-width="1.55" stroke-linecap="round" stroke-linejoin="round"/></svg>
<div class="t12" style="left:467px;top:60px;color:#444444">Available</div>
<div class="t12" style="left:673px;top:60px;color:#444444">Chosen</div>
<div class="a" style="left:467px;top:79px;width:166px;height:160px;background:#fff;border:1px solid #747474;border-radius:4px;box-sizing:border-box"></div>
<div class="a" style="left:673px;top:79px;width:166px;height:160px;background:#fff;border:1px solid #747474;border-radius:4px;box-sizing:border-box"></div>
<div class="t125" style="left:480px;top:96px;color:#181818">Location B</div>
<div class="t125" style="left:480px;top:133px;color:#181818">Location C</div>
<div class="t125" style="left:686px;top:96px;color:#181818">Location A</div>
<svg class="a" style="left:650px;top:90px" width="7" height="10" viewBox="0 0 7 10"><path d="M0 0 L6.5 5 L0 10 Z" fill="#747474"/></svg>
<svg class="a" style="left:649.5px;top:150px" width="7" height="10" viewBox="0 0 7 10"><path d="M6.5 0 L0 5 L6.5 10 Z" fill="#747474"/></svg>
<div class="t12" style="left:467px;top:252px;color:#444444">Cost</div>
<svg class="a" style="left:822px;top:250px" width="18" height="18" viewBox="0 0 18 18"><path d="M6.7 3 L3.4 6.3 L6.7 9.6 M3.6 6.3 H10.4 A4.2 4.2 0 0 1 10.4 14.7 H7.9" fill="none" stroke="#606060" stroke-width="1.55" stroke-linecap="round" stroke-linejoin="round"/></svg>
<div class="a" style="left:467px;top:271px;width:372px;height:32px;background:#fff;border:1px solid #747474;border-radius:4px;box-sizing:border-box"></div>
<div class="t125" style="left:479.4px;top:279px;color:#181818">$129.00</div>
<div class="t12" style="left:467px;top:316px;color:#444444">Description</div>
<svg class="a" style="left:822px;top:314px" width="18" height="18" viewBox="0 0 18 18"><path d="M6.7 3 L3.4 6.3 L6.7 9.6 M3.6 6.3 H10.4 A4.2 4.2 0 0 1 10.4 14.7 H7.9" fill="none" stroke="#606060" stroke-width="1.55" stroke-linecap="round" stroke-linejoin="round"/></svg>
<div class="a" style="left:467px;top:335px;width:372px;height:57px;background:#fff;border:1px solid #747474;border-radius:4px;box-sizing:border-box"></div>
<div class="t125" style="left:479.2px;top:346px;color:#181818">3 Squares per Bundle</div>
<svg class="a" style="left:829px;top:382px" width="9" height="9" viewBox="0 0 9 9"><path d="M7.8 1 L1 7.8 M8 4.8 L4.8 8" stroke="#606060" stroke-width="1"/></svg>
<div class="a" style="left:29px;top:416px;width:844px;height:32px;background:#f3f3f3;border-radius:4px"></div>
<div class="t16" style="left:42.3px;top:423px;color:#181818">Material Quantity</div>
<div class="a" style="left:59px;top:456px;width:380px;height:128px;background:#faf3e1"></div>
<div class="a" style="left:463px;top:456px;width:380px;height:128px;background:#faf3e1"></div>
<div class="t12" style="left:65px;top:461px;color:#ba0517">*</div>
<div class="t12" style="left:72.2px;top:461px;color:#444444">Quantity On Hand</div>
<svg class="a" style="left:418px;top:459px" width="18" height="18" viewBox="0 0 18 18"><path d="M6.7 3 L3.4 6.3 L6.7 9.6 M3.6 6.3 H10.4 A4.2 4.2 0 0 1 10.4 14.7 H7.9" fill="none" stroke="#606060" stroke-width="1.55" stroke-linecap="round" stroke-linejoin="round"/></svg>
<div class="a" style="left:63px;top:480px;width:372px;height:32px;background:#fff;border:1px solid #747474;border-radius:4px;box-sizing:border-box"></div>
<div class="t125" style="left:75.4px;top:488px;color:#181818">25.0000</div>
<div class="t12" style="left:63px;top:525px;color:#444444">Maximum Quantity</div>
<svg class="a" style="left:418px;top:523px" width="18" height="18" viewBox="0 0 18 18"><path d="M6.7 3 L3.4 6.3 L6.7 9.6 M3.6 6.3 H10.4 A4.2 4.2 0 0 1 10.4 14.7 H7.9" fill="none" stroke="#606060" stroke-width="1.55" stroke-linecap="round" stroke-linejoin="round"/></svg>
<div class="a" style="left:63px;top:544px;width:372px;height:32px;background:#fff;border:1px solid #747474;border-radius:4px;box-sizing:border-box"></div>
<div class="t125" style="left:75.4px;top:552px;color:#181818">50.0000</div>
<div class="t12" style="left:469px;top:461px;color:#ba0517">*</div>
<div class="t12" style="left:476.2px;top:461px;color:#444444">Units</div>
<svg class="a" style="left:822px;top:459px" width="18" height="18" viewBox="0 0 18 18"><path d="M6.7 3 L3.4 6.3 L6.7 9.6 M3.6 6.3 H10.4 A4.2 4.2 0 0 1 10.4 14.7 H7.9" fill="none" stroke="#606060" stroke-width="1.55" stroke-linecap="round" stroke-linejoin="round"/></svg>
<div class="a" style="left:467px;top:480px;width:372px;height:32px;background:#fff;border:1px solid #747474;border-radius:4px;box-sizing:border-box"></div>
<div class="t125" style="left:479.4px;top:488px;color:#181818">bundle</div>
<svg class="a" style="left:819px;top:494px" width="10" height="6" viewBox="0 0 10 6"><path d="M0 0 H10 L5 6 Z" fill="#747474"/></svg>
<div class="t12" style="left:467px;top:525px;color:#444444">Reorder Quantity</div>
<svg class="a" style="left:822px;top:523px" width="18" height="18" viewBox="0 0 18 18"><path d="M6.7 3 L3.4 6.3 L6.7 9.6 M3.6 6.3 H10.4 A4.2 4.2 0 0 1 10.4 14.7 H7.9" fill="none" stroke="#606060" stroke-width="1.55" stroke-linecap="round" stroke-linejoin="round"/></svg>
<div class="a" style="left:467px;top:544px;width:372px;height:32px;background:#fff;border:1px solid #747474;border-radius:4px;box-sizing:border-box"></div>
<div class="t125" style="left:479.4px;top:552px;color:#181818">10.0000</div>
<div class="a" style="left:29px;top:600px;width:844px;height:32px;background:#f3f3f3;border-radius:4px"></div>
<div class="t16" style="left:42.3px;top:607px;color:#181818">Material Health</div>
<div class="a" style="left:463px;top:640px;width:380px;height:64px;background:#faf3e1"></div>
<div class="t12" style="left:467px;top:645px;color:#444444">Material Health Warning %</div>
<svg class="a" style="left:822px;top:643px" width="18" height="18" viewBox="0 0 18 18"><path d="M6.7 3 L3.4 6.3 L6.7 9.6 M3.6 6.3 H10.4 A4.2 4.2 0 0 1 10.4 14.7 H7.9" fill="none" stroke="#606060" stroke-width="1.55" stroke-linecap="round" stroke-linejoin="round"/></svg>
<div class="a" style="left:467px;top:664px;width:372px;height:32px;background:#fff;border:1px solid #747474;border-radius:4px;box-sizing:border-box"></div>
<div class="t125" style="left:479.4px;top:672px;color:#181818">10%</div>
<div class="a" style="left:881px;top:11px;width:15px;height:755px;background:#fafafa"></div>
<svg class="a" style="left:884px;top:21px" width="9" height="5" viewBox="0 0 9 5"><path d="M0 5 L4.5 0 L9 5 Z" fill="#8f8f8f"/></svg>
<div class="a" style="left:884px;top:130px;width:9px;height:595px;background:#8f8f8f;border-radius:4.5px"></div>
<svg class="a" style="left:884px;top:751px" width="9" height="5" viewBox="0 0 9 5"><path d="M0 0 L9 0 L4.5 5 Z" fill="#8f8f8f"/></svg>
<div class="a" style="left:21px;top:708px;width:875px;height:58px;background:rgba(243,243,243,0.9);border-top:2px solid #c9c9c9;box-sizing:border-box"></div>
<div class="a" style="left:336px;top:722px;width:72px;height:32px;background:#fff;border:1px solid #747474;border-radius:4px;box-sizing:border-box"></div>
<div class="t125" style="left:336px;width:72px;top:730px;text-align:center;color:#0176d3">Cancel</div>
<div class="a" style="left:412px;top:722px;width:104px;height:32px;background:#fff;border:1px solid #747474;border-radius:4px;box-sizing:border-box"></div>
<div class="t125" style="left:412px;width:104px;top:730px;text-align:center;color:#0176d3">Save &amp; New</div>
<div class="a" style="left:520px;top:722px;width:61px;height:32px;background:#0176d3;border:1px solid #0176d3;border-radius:4px;box-sizing:border-box"></div>
<div class="t125" style="left:520px;width:61px;top:730px;text-align:center;color:#ffffff">Save</div>
</div></div></body></html>
